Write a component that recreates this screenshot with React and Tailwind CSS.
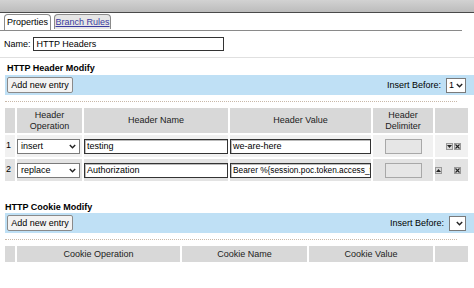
import React from "react";

const font = { fontFamily: '"Liberation Sans", Arial, sans-serif' };

function Chevron() {
  return (
    <svg width="7" height="5" viewBox="0 0 7 5">
      <path d="M0.8 1 L3.5 3.8 L6.2 1" fill="none" stroke="#222" strokeWidth="1.4" />
    </svg>
  );
}

function Select({ value }) {
  return (
    <div className="flex h-[15px] w-[63px] items-center justify-between border border-[#7a7a7a] bg-white pl-[3px] pr-[3px]">
      <span className="text-[9px] leading-none text-black">{value}</span>
      <Chevron />
    </div>
  );
}

function TextInput({ value, small }) {
  return (
    <div
      className={`flex h-[15px] items-center overflow-hidden whitespace-nowrap border border-[#333] bg-white pl-[2px] leading-none text-black shadow-[inset_1px_1px_0_#bbb] ${
        small ? "text-[8.3px]" : "text-[9px]"
      }`}
    >
      {value}
    </div>
  );
}

function IconBox({ children }) {
  return (
    <span className="inline-flex h-[7px] w-[7px] items-center justify-center border border-[#999] bg-[#d8d8d8]">
      {children}
    </span>
  );
}

const Down = () => (
  <IconBox>
    <svg width="5" height="3" viewBox="0 0 5 3"><path d="M0 0 H5 L2.5 3 Z" fill="#222" /></svg>
  </IconBox>
);
const Up = () => (
  <IconBox>
    <svg width="5" height="3" viewBox="0 0 5 3"><path d="M0 3 H5 L2.5 0 Z" fill="#222" /></svg>
  </IconBox>
);
const X = () => (
  <IconBox>
    <svg width="5" height="5" viewBox="0 0 5 5"><path d="M0.5 0.5 L4.5 4.5 M4.5 0.5 L0.5 4.5" stroke="#222" strokeWidth="1.1" /></svg>
  </IconBox>
);

function SectionBar({ selectValue, selW }) {
  return (
    <div className="ml-[5px] flex h-[20px] items-center justify-between bg-[#bfe0f5] pl-[2px] pr-[8px]">
      <div className="flex h-[16px] w-[66px] items-center justify-center rounded-[2px] border border-[#8a8a8a] bg-[#f3f3f3] text-[9px] leading-none text-black">
        Add new entry
      </div>
      <div className="flex items-center gap-[5px]">
        <span className="text-[9px] leading-none text-black">Insert Before:</span>
        <div className={`flex h-[15px] items-center justify-between border border-[#7a7a7a] bg-white px-[2px] ${selW}`}>
          <span className="text-[9px] leading-none">{selectValue}</span>
          <Chevron />
        </div>
      </div>
    </div>
  );
}

function Dotted() {
  return <div className="ml-[5px] mt-[6px] w-[452px] border-t border-dotted border-[#c9b8a8]" />;
}

export default function App() {
  const th = "bg-[#d8d8d8] text-[9px] font-normal leading-[11px] text-[#222] text-center align-middle";
  return (
    <div className="h-[288px] w-[474px] overflow-hidden bg-white text-[9px] text-black" style={font}>
      {/* top bar */}
      <div className="h-[13px] border-b border-[#4a4a4a] bg-gradient-to-b from-[#d2d2d2] to-[#bcbcbc]" />

      {/* tabs */}
      <div className="mt-[1px] flex h-[17px] w-[462px] items-end gap-[3px] border-b border-[#8a8a8a] pl-[4px]">
        <div className="flex h-[16px] w-[47px] items-center justify-center whitespace-nowrap rounded-t-[4px] border border-b-0 border-[#8a8a8a] bg-white text-[9px] leading-none">
          Properties
        </div>
        <div className="mb-[1px] flex h-[15px] w-[57px] items-center justify-center whitespace-nowrap rounded-t-[4px] border border-b-0 border-[#8a8a8a] bg-[#e6e6e6] text-[9px] leading-none text-[#3a3aa0] underline">
          Branch Rules
        </div>
      </div>

      {/* name */}
      <div className="mt-[6px] flex items-center gap-[2px] pl-[4px]">
        <span className="text-[9px] leading-none">Name:</span>
        <div className="flex h-[14px] w-[191px] items-center border border-[#333] bg-white pl-[3px] text-[9px] leading-none">
          HTTP Headers
        </div>
      </div>

      <div className="mt-[6px] border-t border-[#e0e0e0]" />

      {/* Header modify */}
      <div className="mt-[4px] pl-[7px] text-[9px] font-bold leading-[12px]">HTTP Header Modify</div>
      <div className="mt-[1px]">
        <SectionBar selectValue="1" selW="w-[20px]" />
      </div>
      <Dotted />

      <table className="ml-[3px] mt-[4px] w-[467px] table-fixed border-separate border-spacing-[2px]">
        <colgroup>
          <col className="w-[10px]" />
          <col className="w-[65px]" />
          <col className="w-[144px]" />
          <col className="w-[141px]" />
          <col className="w-[60px]" />
          <col className="w-[33px]" />
        </colgroup>
        <thead>
          <tr className="h-[25px]">
            <th className={th}></th>
            <th className={th}>Header<br />Operation</th>
            <th className={th}>Header Name</th>
            <th className={th}>Header Value</th>
            <th className={th}>Header<br />Delimiter</th>
            <th className={th}></th>
          </tr>
        </thead>
        <tbody>
          <tr className="h-[22px] bg-[#f1f1f1]">
            <td className="pl-[1px] text-[9px]">1</td>
            <td><Select value="insert" /></td>
            <td><TextInput value="testing" /></td>
            <td><TextInput value="we-are-here" /></td>
            <td>
              <div className="mx-auto h-[15px] w-[37px] border border-[#a8a8a8] bg-[#e6e6e6]" />
            </td>
            <td>
              <div className="flex items-center justify-end gap-[1px] pr-[7px]"><Down /><X /></div>
            </td>
          </tr>
          <tr className="h-[22px] bg-[#e3e3e3]">
            <td className="pl-[1px] text-[9px]">2</td>
            <td><Select value="replace" /></td>
            <td><TextInput value="Authorization" /></td>
            <td><TextInput small value="Bearer %{session.poc.token.access_t" /></td>
            <td>
              <div className="mx-auto h-[15px] w-[37px] border border-[#a8a8a8] bg-[#e6e6e6]" />
            </td>
            <td>
              <div className="flex items-center justify-between pl-0 pr-[7px]"><Up /><X /></div>
            </td>
          </tr>
        </tbody>
      </table>

      {/* Cookie modify */}
      <div className="mt-[18px] pl-[5px] text-[9px] font-bold leading-[12px]">HTTP Cookie Modify</div>
      <SectionBar selectValue="" selW="w-[17px]" />
      <Dotted />
      <table className="ml-[3px] mt-[4px] w-[467px] table-fixed border-separate border-spacing-[2px]">
        <colgroup>
          <col className="w-[10px]" />
          <col className="w-[163px]" />
          <col className="w-[125px]" />
          <col className="w-[124px]" />
          <col className="w-[33px]" />
        </colgroup>
        <thead>
          <tr className="h-[16px]">
            <th className={th}></th>
            <th className={th}>Cookie Operation</th>
            <th className={th}>Cookie Name</th>
            <th className={th}>Cookie Value</th>
            <th className={th}></th>
          </tr>
        </thead>
      </table>
    </div>
  );
}
